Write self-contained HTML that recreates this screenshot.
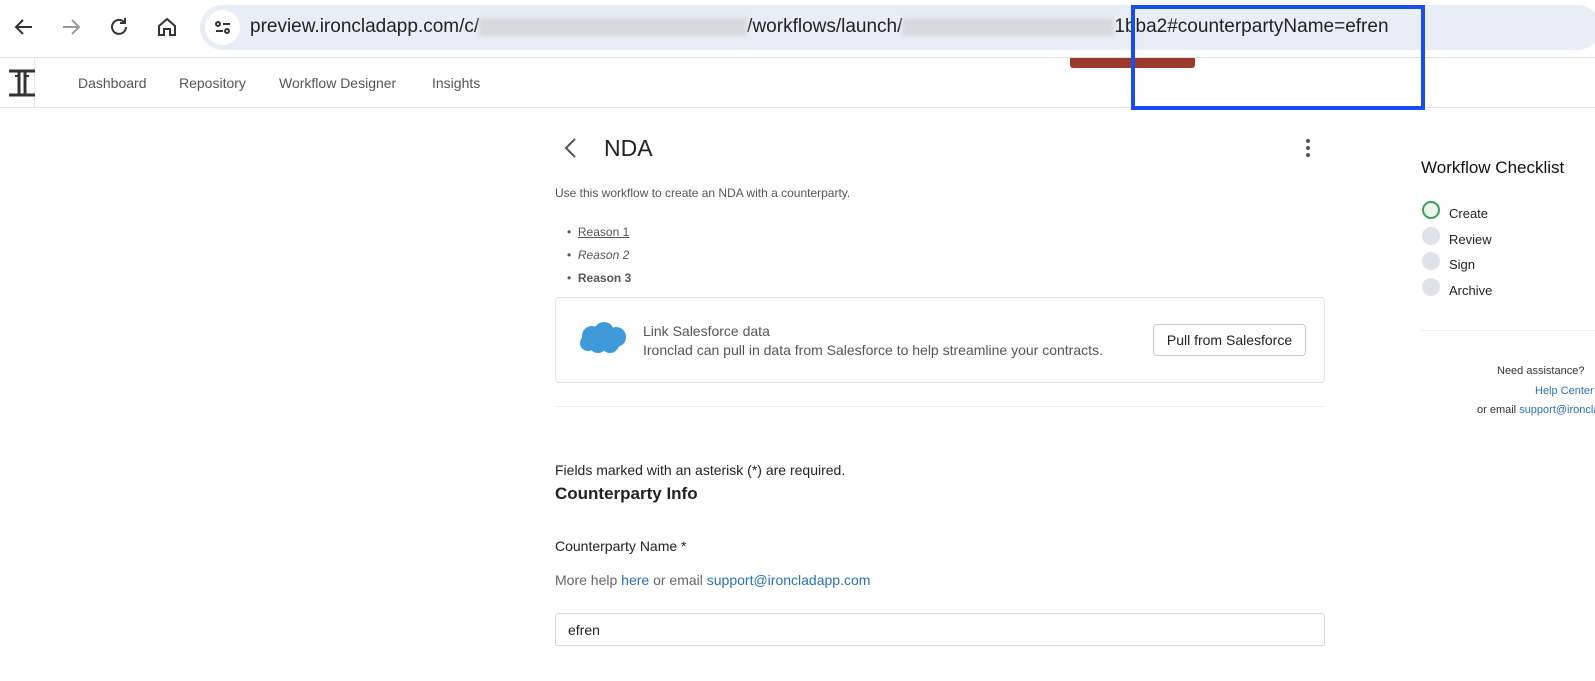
<!DOCTYPE html><html><head><style>
body{margin:0;width:1595px;height:681px;overflow:hidden;background:#fff;font-family:"Liberation Sans",Arial,sans-serif;position:relative}
.a{position:absolute}
.t{position:absolute;white-space:nowrap}
</style></head><body>
<div class="a" style="left:200px;top:5px;width:1400px;height:45px;border-radius:23px;background:#e9edf6"></div>
<div class="a" style="left:205px;top:10px;width:35px;height:35px;border-radius:50%;background:#fff"></div>
<svg class="a" style="left:212px;top:17px" width="22" height="22" viewBox="0 0 22 22" fill="none" stroke="#333" stroke-width="2"><circle cx="6" cy="7" r="2"/><line x1="11" y1="7" x2="18" y2="7"/><circle cx="15" cy="14" r="2"/><line x1="4" y1="14" x2="11" y2="14"/></svg>
<svg class="a" style="left:12px;top:15px" width="24" height="24" viewBox="0 0 24 24" fill="none" stroke="#333" stroke-width="2"><path d="M20 12H5M11 5l-7 7 7 7"/></svg>
<svg class="a" style="left:59px;top:15px" width="24" height="24" viewBox="0 0 24 24" fill="none" stroke="#999" stroke-width="2"><path d="M4 12h15M13 5l7 7-7 7"/></svg>
<svg class="a" style="left:107px;top:15px" width="24" height="24" viewBox="0 0 24 24" fill="none" stroke="#333" stroke-width="2"><path d="M19 12a7 7 0 1 1-2-5"/><path d="M18 3v5h-5"/></svg>
<svg class="a" style="left:155px;top:15px" width="24" height="24" viewBox="0 0 24 24" fill="none" stroke="#333" stroke-width="2"><path d="M4 11l8-7 8 7v9h-5v-6h-6v6H4z"/></svg>
<div class="t" style="left:250px;top:16px;font-size:19px;color:#222">preview.ironcladapp.com/c/<span style="display:inline-block;width:268px;height:18px;background:#d6d8dc;vertical-align:middle;filter:blur(2px)"></span>/workflows/launch/<span style="display:inline-block;width:212px;height:18px;background:#d6d8dc;vertical-align:middle;filter:blur(2px)"></span>1bba2#counterpartyName=efren</div>
<div class="a" style="left:0;top:57px;width:1595px;height:1px;background:#ddd"></div>
<div class="a" style="left:0;top:107px;width:1595px;height:1px;background:#e8e8e8"></div>
<div class="a" style="left:34px;top:58px;width:1px;height:49px;background:#e5e5e5"></div>
<svg class="a" style="left:8px;top:68px" width="28" height="30" viewBox="0 0 28 30" fill="none" stroke="#333" stroke-width="3"><path d="M1 3h26M1 27h26M11 3v24M17 3v24"/><path d="M7 8h4M17 8h4" stroke-width="2"/></svg>
<div class="t" style="left:78px;top:75px;font-size:14px;color:#555">Dashboard</div>
<div class="t" style="left:179px;top:75px;font-size:14px;color:#555">Repository</div>
<div class="t" style="left:279px;top:75px;font-size:14px;color:#555">Workflow Designer</div>
<div class="t" style="left:432px;top:75px;font-size:14px;color:#555">Insights</div>
<div class="a" style="left:1070px;top:58px;width:125px;height:10px;background:#9b3a2a;border-radius:0 0 3px 3px"></div>
<div class="a" style="left:1131px;top:5px;width:286px;height:97px;border:4px solid #1a4df0"></div>
<svg class="a" style="left:560px;top:136px" width="22" height="24" viewBox="0 0 22 24" fill="none" stroke="#555" stroke-width="2"><path d="M15 3L6 12l9 9"/></svg>
<div class="t" style="left:604px;top:135px;font-size:23px;color:#222">NDA</div>
<svg class="a" style="left:1303px;top:138px" width="10" height="20" viewBox="0 0 10 20" fill="#555"><circle cx="5" cy="3" r="2"/><circle cx="5" cy="10" r="2"/><circle cx="5" cy="17" r="2"/></svg>
<div class="t" style="left:555px;top:186px;font-size:12px;color:#555">Use this workflow to create an NDA with a counterparty.</div>
<div class="t" style="left:567px;top:221px;font-size:12px;color:#555;line-height:23px">•&nbsp;&nbsp;<u>Reason 1</u><br>•&nbsp;&nbsp;<i>Reason 2</i><br>•&nbsp;&nbsp;<b>Reason 3</b></div>
<div class="a" style="left:555px;top:297px;width:768px;height:84px;border:1px solid #e2e2e2;border-radius:4px"></div>
<svg class="a" style="left:578px;top:320px" width="52" height="36" viewBox="0 0 52 36"><g fill="#3e9ad9"><circle cx="14" cy="16" r="10"/><circle cx="26" cy="12" r="10"/><circle cx="38" cy="17" r="10"/><circle cx="20" cy="24" r="9"/><circle cx="32" cy="24" r="9"/><circle cx="10" cy="23" r="8"/></g></svg>
<div class="t" style="left:643px;top:323px;font-size:14px;color:#555">Link Salesforce data</div>
<div class="t" style="left:643px;top:342px;font-size:14px;color:#555">Ironclad can pull in data from Salesforce to help streamline your contracts.</div>
<div class="a" style="left:1153px;top:324px;width:153px;height:32px;border:1px solid #ccc;border-radius:4px;box-sizing:border-box;font-size:14px;color:#222;text-align:center;line-height:30px">Pull from Salesforce</div>
<div class="a" style="left:555px;top:406px;width:770px;height:1px;background:#eee"></div>
<div class="t" style="left:555px;top:462px;font-size:14px;color:#222">Fields marked with an asterisk (*) are required.</div>
<div class="t" style="left:555px;top:484px;font-size:17px;font-weight:bold;color:#222">Counterparty Info</div>
<div class="t" style="left:555px;top:538px;font-size:14px;color:#222">Counterparty Name *</div>
<div class="t" style="left:555px;top:572px;font-size:14px;color:#666">More help <span style="color:#2a6fbd">here</span> or email <span style="color:#2a6fbd">support@ironcladapp.com</span></div>
<div class="a" style="left:555px;top:613px;width:770px;height:33px;border:1px solid #d6d6d6;border-radius:3px;box-sizing:border-box"></div>
<div class="t" style="left:568px;top:622px;font-size:14px;color:#222">efren</div>
<div class="t" style="left:1421px;top:158px;font-size:17px;color:#111">Workflow Checklist</div>
<div class="a" style="left:1422px;top:201px;width:14px;height:14px;border:2px solid #3aa05c;border-radius:50%;background:#eaf5ec"></div>
<div class="a" style="left:1422px;top:227px;width:18px;height:18px;border-radius:50%;background:#e1e2e8"></div>
<div class="a" style="left:1422px;top:252px;width:18px;height:18px;border-radius:50%;background:#e1e2e8"></div>
<div class="a" style="left:1422px;top:278px;width:18px;height:18px;border-radius:50%;background:#e1e2e8"></div>
<div class="t" style="left:1449px;top:201px;font-size:13px;color:#222;line-height:25.7px">Create<br>Review<br>Sign<br>Archive</div>
<div class="a" style="left:1421px;top:330px;width:180px;height:1px;background:#eee"></div>
<div class="t" style="left:1497px;top:365px;font-size:11px;color:#333">Need assistance?</div>
<div class="t" style="left:1535px;top:385px;font-size:11px;color:#2a6fbd">Help Center</div>
<div class="t" style="left:1477px;top:404px;font-size:11px;color:#333">or email <span style="color:#2a6fbd">support@ironcladapp.com</span></div>
</body></html>
